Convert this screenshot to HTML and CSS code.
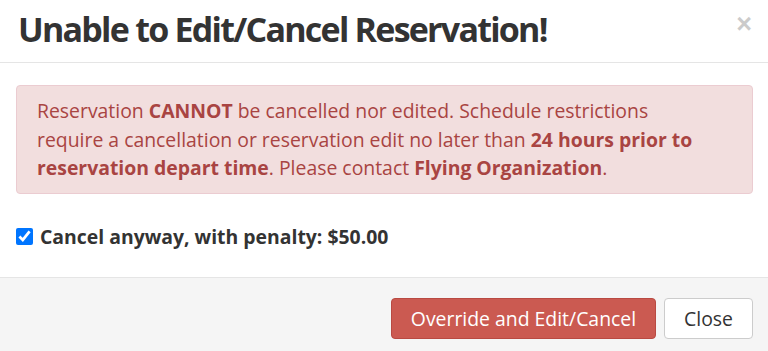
FILE: index.html
```html
<!DOCTYPE html>
<html>
<head>
<meta charset="utf-8">
<link rel="stylesheet" href="styles.css">
</head>
<body>
<div class="modal">
  <div class="modal-header">
    <h1 class="modal-title">Unable to Edit/Cancel Reservation!</h1>
    <button class="close" type="button">&times;</button>
  </div>
  <div class="modal-body">
    <div class="alert">Reservation <b>CANNOT</b> be cancelled nor edited. Schedule restrictions require a cancellation or reservation edit no later than <b>24 hours prior to reservation depart time</b>. Please contact <b>Flying Organization</b>.</div>
    <label class="check"><input type="checkbox" checked> Cancel anyway, with penalty: $50.00</label>
  </div>
  <div class="modal-footer">
    <button class="btn btn-danger" type="button">Override and Edit/Cancel</button>
    <button class="btn btn-default" type="button">Close</button>
  </div>
</div>
</body>
</html>
```
FILE: styles.css
```css
* { box-sizing: border-box; }
html, body { margin: 0; padding: 0; background: #fff; }
body { font-family: "Open Sans", "Liberation Sans", sans-serif; color: #333; width: 768px; height: 351px; overflow: hidden; }
.modal { display: flex; flex-direction: column; height: 351px; }
.modal-header { display: flex; align-items: center; justify-content: space-between; height: 63px; padding: 0 16px 4px 18px; border-bottom: 1px solid #e5e5e5; }
.modal-title { margin: 0; font-size: 34px; font-weight: 700; line-height: 1; color: #333; letter-spacing: -1.75px; }
.close { background: none; border: 0; padding: 0; font-size: 27px; font-weight: 700; color: #000; opacity: 0.2; line-height: 1; font-family: "Liberation Sans", sans-serif; margin-top: -10px; }
.modal-body { padding: 22px 15px 0 16px; height: 214px; }
.alert { background: #f2dede; border: 1px solid #ebccd1; color: #a94442; border-radius: 4px; padding: 11px 45px 10px 20px; font-size: 19.4px; line-height: 28.5px; }
.alert b { font-weight: 700; }
.check { display: flex; align-items: center; margin-top: 29px; font-size: 19.4px; font-weight: 700; color: #333; }
.check input { width: 17px; height: 17px; margin: 0 7px 0 0; }
.modal-footer { flex: 1; background: #f5f5f5; border-top: 1px solid #e5e5e5; display: flex; justify-content: flex-end; align-items: flex-start; padding: 20px 15px 0 0; gap: 8px; }
.btn { font-family: "Open Sans", "Liberation Sans", sans-serif; font-size: 19.4px; height: 41px; padding: 0 19px; border-radius: 4px; border: 1px solid; line-height: 39px; }
.btn-danger { background: #cb5a51; border-color: #b94a42; color: #fff; }
.btn-default { background: #fff; border-color: #ccc; color: #333; }
```
